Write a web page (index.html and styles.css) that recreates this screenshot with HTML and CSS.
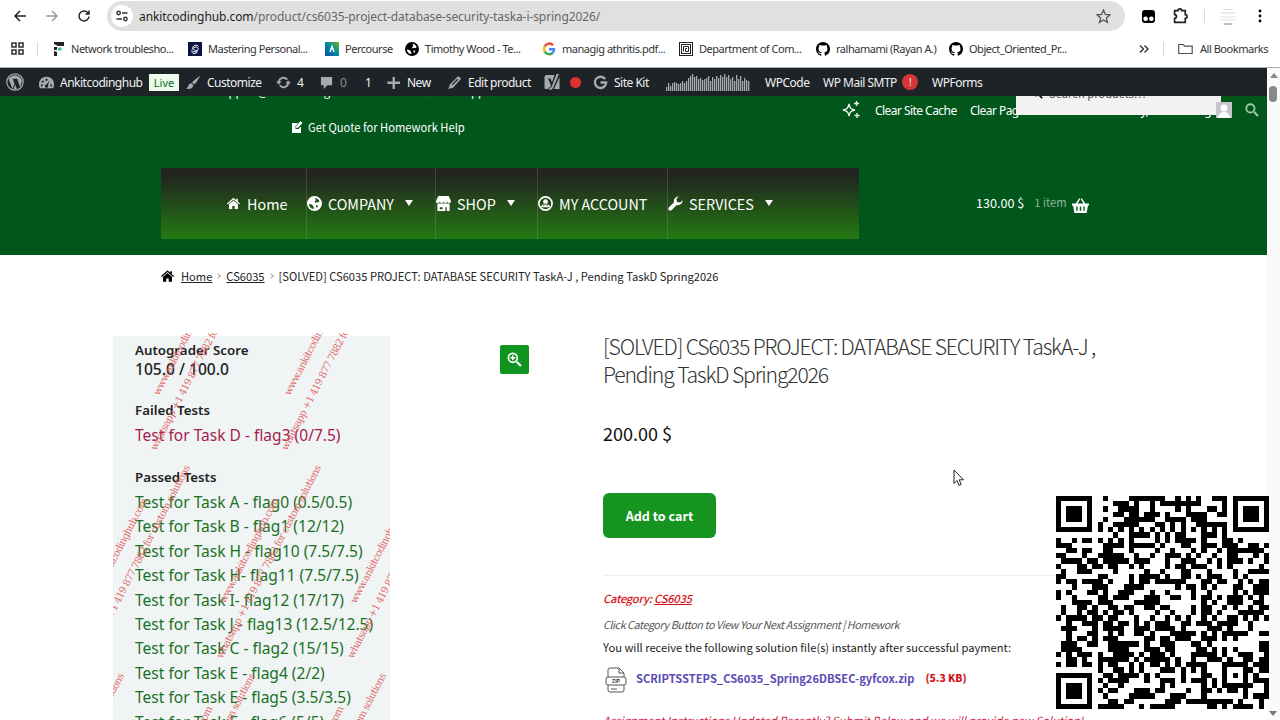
FILE: index.html
```html
<!DOCTYPE html>
<html lang="en">
<head>
  <meta charset="UTF-8" />
  <meta name="viewport" content="width=device-width, initial-scale=1.0"/>
  <title>[SOLVED] CS6035 PROJECT: DATABASE SECURITY - Ankitcodinghub</title>
  <link rel="stylesheet" href="styles.css">
</head>
<body>

  <svg class="defs">
    <symbol id="github" viewBox="0 0 16 16"><path d="M8 0C3.58 0 0 3.58 0 8c0 3.54 2.29 6.53 5.47 7.59.4.07.55-.17.55-.38 0-.19-.01-.82-.01-1.49-2.01.37-2.53-.49-2.69-.94-.09-.23-.48-.94-.82-1.13-.28-.15-.68-.52-.01-.53.63-.01 1.08.58 1.23.82.72 1.21 1.87.87 2.33.66.07-.52.28-.87.51-1.07-1.78-.2-3.64-.89-3.64-3.95 0-.87.31-1.59.82-2.15-.08-.2-.36-1.02.08-2.12 0 0 .67-.21 2.2.82a7.6 7.6 0 0 1 4 0c1.53-1.04 2.2-.82 2.2-.82.44 1.1.16 1.92.08 2.12.51.56.82 1.27.82 2.15 0 3.07-1.87 3.75-3.65 3.95.29.25.54.73.54 1.48 0 1.07-.01 1.93-.01 2.2 0 .21.15.46.55.38A8 8 0 0 0 16 8c0-4.42-3.58-8-8-8z"/></symbol>
    <symbol id="home" viewBox="0 0 16 14"><path d="M8 0 0 7l1 1.2L8 2.1l7 6.1L16 7l-2.600-2.300V1h-2v2zM8 3.300 2.500 8v6h4v-4h3v4h4V8z"/></symbol>
    <symbol id="globe" viewBox="0 0 16 16"><path fill-rule="evenodd" d="M8 0a8 8 0 1 0 0 16A8 8 0 0 0 8 0zM8.500 2c2 0 4 1.500 4.800 3.500L12 7l-1.500-.500L9 7.500 8 6l1.500-1.500zM2 8.500 5 9l1.500 1.500 1 3.300C4.500 13.800 2.300 11.500 2 8.500zM10 9.500l2 .5-1.500 2.500-1-1z"/></symbol>
    <symbol id="lens" viewBox="0 0 16 16"><circle cx="6.200" cy="6.200" r="4.700" fill="none" stroke="currentColor" stroke-width="2.200"/><path d="m9.500 11.200 1.700-1.700 4.500 4.500-1.700 1.700z"/></symbol>
  </svg>

  <!-- browser toolbar -->
  <div class="toolbar">
    <svg class="tb-icon back" viewBox="0 0 14 14"><path d="M13 7H2M7 2 2 7l5 5"/></svg>
    <svg class="tb-icon forward" viewBox="0 0 14 14"><path d="M1 7h11M7 2l5 5-5 5"/></svg>
    <svg class="tb-icon reload" viewBox="0 0 14 14"><path d="M12 7.500A5 5 0 1 1 10.800 3.700L12 5M12 1.500V5H8.500"/></svg>
    <div class="address">
      <span class="site-info"><svg viewBox="0 0 12 12"><circle cx="2.600" cy="3" r="1.700"/><path d="M6 3h5.500M.500 9H6"/><circle cx="9.400" cy="9" r="1.700"/></svg></span>
      <span class="url"><b>ankitcodinghub.com</b>/product/cs6035-project-database-security-taska-i-spring2026/</span>
      <svg class="star" viewBox="0 0 14 14"><path d="m7 1 1.700 4 4.300.400-3.300 2.900 1 4.200L7 10.300l-3.700 2.200 1-4.200L1 5.400 5.300 5z"/></svg>
    </div>
    <svg class="ext" viewBox="0 0 13 13"><rect width="13" height="13" rx="3"/><circle cx="3.600" cy="8.800" r="2.300" fill="#fff"/><circle cx="9.400" cy="8.800" r="2.300" fill="#fff"/></svg>
    <svg class="puzzle" viewBox="0 0 15 15"><path d="M1.500 2.500h3.300a1.700 1.700 0 0 1 3.400 0h3.300v3.800a1.700 1.700 0 0 1 0 3.400v3.800h-10v-3.800a1.700 1.700 0 0 0 0-3.400z"/></svg>
    <span class="divider"></span>
    <svg class="profile" viewBox="0 0 18 18"><path d="M4 2.500h10M1.500 6h15M1 10h16M2 13h14" stroke="#d8dde0"/><path d="M5 17h8" stroke="#aaa" stroke-width="1.500"/></svg>
    <svg class="dots" viewBox="0 0 4 14"><circle cx="2" cy="2" r="1.400"/><circle cx="2" cy="7" r="1.400"/><circle cx="2" cy="12" r="1.400"/></svg>
  </div>

  <div class="bookmarks">
    <svg class="apps" viewBox="0 0 13 13"><path d="M1 1h4v4H1zM8 1h4v4H8zM1 8h4v4H1zM8 8h4v4H8z"/></svg>
    <span class="divider"></span>
    <a class="bm"><svg viewBox="0 0 14 14"><path d="M3 0h10v4H7L3 2zM3 5h3v3H3zM3 9l3 1v4H3z" fill="#222"/><path d="M7 5.500h3.500v3H7z" fill="#35c3a4"/></svg>Network troublesho...</a>
    <a class="bm"><svg viewBox="0 0 14 14"><rect width="14" height="14" fill="#0b1344"/><path d="M10.500 4.500C9 2 4 3.500 5 6.500s5 1 4 3.500-5 1.500-5.500-.500M4 7.500C6 4 11 4.500 10 7.500s-5 3-6 1" fill="none" stroke="#fff"/></svg>Mastering Personal...</a>
    <a class="bm bm-short"><svg viewBox="0 0 14 14"><defs><linearGradient id="pg" x1="0" y1="1" x2="1" y2="0"><stop stop-color="#064ea5"/><stop offset=".5" stop-color="#0089a5"/><stop offset="1" stop-color="#66bb18"/></linearGradient></defs><rect width="14" height="14" fill="url(#pg)"/><path d="m5 10 2-5.500L9 10" fill="none" stroke="#fff" stroke-width="1.500"/></svg>Percourse</a>
    <a class="bm"><svg viewBox="0 0 16 16"><use href="#globe"/></svg>Timothy Wood - Te...</a>
    <a class="bm"><svg viewBox="0 0 14 14" fill="none" stroke-width="2.400"><path d="M11 3.200A5 5 0 0 0 2.700 4.500" stroke="#ea4335"/><path d="M2.700 4.500a5.200 5.200 0 0 0 0 5" stroke="#fbbc04"/><path d="M2.700 9.500A5 5 0 0 0 10.500 11" stroke="#34a853"/><path d="M10.500 11A5 5 0 0 0 12 7.200H7" stroke="#4285f4"/></svg>managig athritis.pdf...</a>
    <a class="bm"><svg viewBox="0 0 14 14" fill="none" stroke="#222"><rect x=".5" y=".5" width="13" height="13"/><rect x="2.500" y="2.500" width="9" height="9"/><path d="M4.500 9.500v-5h5v5h-3v-3h1.500"/></svg>Department of Com...</a>
    <a class="bm bm-git"><svg><use href="#github"/></svg>ralhamami (Rayan A.)</a>
    <a class="bm bm-last"><svg><use href="#github"/></svg>Object_Oriented_Pr...</a>
    <svg class="more" viewBox="0 0 10 10"><path d="m1 1.500 3.500 3.500L1 8.500M5.500 1.500 9 5 5.500 8.500"/></svg>
    <span class="divider"></span>
    <a class="bm-all"><svg viewBox="0 0 15 12"><path d="M.7 10.500v-9h4.500l1.500 1.700h7.500v7.300z"/></svg>All Bookmarks</a>
  </div>

  <div class="viewport">
    <!-- wordpress admin bar -->
    <div class="adminbar">
      <svg class="ab-wp" viewBox="0 0 18 18"><circle cx="9" cy="9" r="8.200" fill="none" stroke="#a7aaad" stroke-width="1.200"/><path d="M2.400 5.800 6.600 16l1.900-5.200L6.700 5.800h4.500l3 8.800 1.600-5.500c.4-2-.6-3-1.300-4.200A7 7 0 0 0 3.300 5zM9.300 11.500l-1.700 4.700h3.300z"/></svg>
      <a class="ab-item" style="width:103px"><svg viewBox="0 0 16 16"><path fill-rule="evenodd" d="M8 2a8 8 0 0 0-7 12h14A8 8 0 0 0 8 2zM7 4h2v2H7zM3 6h2v2H3zM11.500 5.500 9.500 11a1.700 1.700 0 1 1-1.500-.800zM2 10h2v2H2zM12 10h2v2h-2z"/></svg>Ankitcodinghub</a>
      <span class="live">Live</span>
      <a class="ab-item" style="width:90px"><svg viewBox="0 0 16 16"><path d="M15.500.500 8 6 6.500 8l2 2L10.500 8.500zM5.700 8.700C2 9 3.500 12.500 0 14.500c3 1 7.500 0 7.800-3.700z"/></svg>Customize</a>
      <a class="ab-item" style="width:43px"><svg viewBox="0 0 16 16"><path d="M3 7.500A5 5 0 0 1 12 5M13 8.500A5 5 0 0 1 4 11" fill="none" stroke="#a7aaad" stroke-width="2"/><path d="M0 7h6L3 10.500zM10 9h6l-3-3.500z"/></svg>4</a>
      <a class="ab-item" style="width:44px"><svg viewBox="0 0 16 16"><path d="M2 2h12v9H9l-4 4v-4H2z"/></svg><i>0</i></a>
      <a class="ab-text" style="width:23px">1</a>
      <a class="ab-item" style="width:61px"><svg viewBox="0 0 16 16"><path d="M7 2h2.500v5H15v2.500H9.500V15H7V9.500H1.500V7H7z"/></svg>New</a>
      <a class="ab-item" style="width:95px"><svg viewBox="0 0 16 16"><path fill-rule="evenodd" d="m12 1 3 3-8.500 9.500L1.500 15 3 10zM11 4 5 10l1 1 6-6z"/></svg>Edit product</a>
      <svg class="ab-yoast" viewBox="0 0 16 16"><path fill-rule="evenodd" d="M2 1h8.500L8 8.500 6.500 4.500H4l3 7c-.5 1.500-1 2-2.500 2V15H2a1.500 1.500 0 0 1-1.500-1.500v-11zM12.500 0H15L9.500 13c-.8 2-2 3-4 3v-2c1.500 0 2-.8 2.500-2zM15.500 3v12H10z"/></svg>
      <span class="ab-dot"></span>
      <a class="ab-item" style="width:71px"><svg viewBox="0 0 16 16"><path d="M13 4.500A6 6 0 1 0 14 8H8" fill="none" stroke="#a7aaad" stroke-width="2.500"/></svg>Site Kit</a>
      <svg class="ab-bars" id="stats" viewBox="0 0 85 18"></svg>
      <a class="ab-text" style="width:58px">WPCode</a>
      <a class="ab-text" style="width:79px">WP Mail SMTP</a>
      <span class="ab-alert">!</span>
      <a class="ab-text">WPForms</a>
    </div>

    <header class="site-header">
      <!-- admin bar items that wrap on to a second row -->
      <div class="adminbar-wrap">
        <svg class="sparkle" viewBox="0 0 20 20"><path d="M8 4c.8 4 2 5.200 6 6-4 .8-5.200 2-6 6-.8-4-2-5.200-6-6 4-.8 5.200-2 6-6zM15.500 1v5M13 3.500h5M16 13v5M13.500 15.500h5"/></svg>
        <a class="wrap-cache">Clear Site Cache</a>
        <a class="wrap-page">Clear Page Cache</a>
        <a class="wrap-howdy">Howdy, ankitcodinghub</a>
        <svg class="avatar" viewBox="0 0 16 16"><path d="M0 0h16v16H0z" fill="#c5c5cb"/><circle cx="8" cy="6" r="3.500" fill="#fff"/><path d="M2 16c0-8 12-8 12 0z" fill="#fff"/></svg>
        <svg class="wrap-lens"><use href="#lens"/></svg>
      </div>
      <div class="product-search"><svg><use href="#lens"/></svg>Search products…</div>

      <div class="contact">
        <span class="mail">✉ support@ankitcodinghub.com</span><span class="phone">✆ whatsapp +1 419 877 7882</span>
      </div>
      <a class="quote"><svg viewBox="0 0 12 12"><path d="M1 2h6L4.500 5v3h3L10 5.500V12H1zM9.500 0l2 2-4.500 4.800-2 .2.200-2z"/></svg>Get Quote for Homework Help</a>

      <div class="nav-row">
        <nav class="menu">
          <a class="m-home"><svg viewBox="0 0 16 14"><use href="#home"/></svg>Home</a>
          <a class="m-company"><svg><use href="#globe"/></svg>COMPANY<b></b></a>
          <a class="m-shop"><svg viewBox="0 0 16 16"><path d="M2.500 0h11L16 5.500c0 2-2.500 3-4 1-1.200 1.500-2.800 1.500-4 0-1.200 1.500-2.800 1.500-4 0-1.500 2-4 1-4-1zM1.500 8h13v8h-3v-4h-1.500v4H1.500zM4 12h3v2H4z" fill-rule="evenodd"/></svg>SHOP<b></b></a>
          <a class="m-account"><svg viewBox="0 0 16 16"><circle cx="8" cy="8" r="7" fill="none" stroke="#fff" stroke-width="1.800"/><circle cx="8" cy="6" r="2.600"/><path d="M3 12c1-4.500 9-4.500 10 0z"/><path d="M5.500 10.500 8 8.500l2.500 2" stroke="#245a17" fill="none"/></svg>MY ACCOUNT</a>
          <a class="m-services"><svg viewBox="0 0 16 16"><path d="M15.500 4.500A4.800 4.800 0 0 1 9.300 9.500L4 15a2 2 0 0 1-3-3l5.500-5.300A4.800 4.800 0 0 1 11.500.5L9 3l.5 3.500L13 7z"/></svg>SERVICES<b></b></a>
        </nav>
        <a class="cart"><span class="amount">130.00 $</span><span class="count">1 item</span><svg viewBox="0 0 16 14"><path fill-rule="evenodd" d="M3.500 5 6.800.200l1 .7L5.200 5h5.600L8.200.9l1-.7L12.500 5H16v2h-1l-1.200 7H2.200L1 7H0V5zM4 8v4h1.300V8zm3.300 0v4h1.400V8zm3.400 0v4H12V8z"/></svg></a>
      </div>
    </header>

    <div class="breadcrumb"><svg><use href="#home"/></svg><a>Home</a><i></i><a>CS6035</a><i></i><span>[SOLVED] CS6035 PROJECT: DATABASE SECURITY TaskA-J , Pending TaskD Spring2026</span></div>

    <main class="product">
      <div class="gallery">
        <h4>Autograder Score</h4>
        <p class="score">105.0 / 100.0</p>
        <h4 class="failed-head">Failed Tests</h4>
        <p class="failed">Test for Task D - flag3 (0/7.5)</p>
        <h4 class="passed-head">Passed Tests</h4>
        <ul class="passed">
          <li>Test for Task A - flag0 (0.5/0.5)</li>
          <li>Test for Task B - flag1 (12/12)</li>
          <li>Test for Task H - flag10 (7.5/7.5)</li>
          <li>Test for Task H- flag11 (7.5/7.5)</li>
          <li>Test for Task I- flag12 (17/17)</li>
          <li>Test for Task J - flag13 (12.5/12.5)</li>
          <li>Test for Task C - flag2 (15/15)</li>
          <li>Test for Task E - flag4 (2/2)</li>
          <li>Test for Task E - flag5 (3.5/3.5)</li>
          <li>Test for Task F - flag6 (5/5)</li>
        </ul>
        <svg class="watermark" id="watermark" viewBox="113 333 277 387"></svg>
      </div>

      <span class="zoom"><svg viewBox="0 0 16 16"><circle cx="6.200" cy="6.200" r="4.800" fill="none" stroke="#fff" stroke-width="1.800"/><path d="M5.400 3.500H7v1.900h1.900V7H7v1.900H5.400V7H3.500V5.400h1.900zM9.500 11.200l1.700-1.700 4.500 4.500-1.700 1.700z"/></svg></span>

      <div class="summary">
        <h1>[SOLVED] CS6035 PROJECT: DATABASE SECURITY TaskA-J ,<br>Pending TaskD Spring2026</h1>
        <p class="price">200.00 $</p>
        <button class="add">Add to cart</button>
        <div class="meta">
          <p class="category">Category: <a>CS6035</a></p>
          <p class="hint">Click Category Button to View Your Next Assignment | Homework</p>
          <p class="receive">You will receive the following solution file(s) instantly after successful payment:</p>
          <p class="file"><svg viewBox="0 0 22 26"><path d="M3 10V3a2 2 0 0 1 2-2h9l5 5v4M14 1v5h5M3 18v5a2 2 0 0 0 2 2h12a2 2 0 0 0 2-2v-5M6 22h6"/><rect x="1" y="10" width="20" height="8" rx="2"/><text x="11" y="16">ZIP</text></svg><a>SCRIPTSSTEPS_CS6035_Spring26DBSEC-gyfcox.zip</a><b>(5.3 KB)</b></p>
          <p class="update">Assignment Instructions Updated Recently? Submit Below and we will provide new Solution!</p>
        </div>
      </div>
    </main>

    <div class="scrollbar"><i class="up"></i><i class="thumb"></i><i class="down"></i></div>
  </div>

  <svg class="qr" id="qr" viewBox="0 0 41 41"></svg>
  <svg class="pointer" viewBox="0 0 12 18"><path d="M1 1v13.500l3-3 2 5 2.200-1-2-4.700h4.300z"/></svg>

  <script src="script.js"></script>
</body>
</html>
```
FILE: styles.css
```css
* {
  box-sizing: border-box;
}

body {
  margin: 0;
  width: 1280px;
  height: 720px;
  overflow: hidden;
  position: relative;
  background: #fff;
  font-family: "Noto Sans CJK SC", "Noto Sans", sans-serif;
  color: #222;
}

p, h1, h4, ul {
  margin: 0;
  padding: 0;
}

svg {
  flex: none;
  display: block;
}

.defs {
  position: absolute;
  width: 0;
  height: 0;
}

/* browser toolbar */
.toolbar {
  height: 32px;
  display: flex;
  align-items: center;
  font-family: "Noto Sans", sans-serif;
}

.tb-icon {
  width: 14px;
  height: 14px;
  fill: none;
  stroke: #222;
  stroke-width: 1.5;
}

.back {
  margin-left: 13px;
}

.forward {
  margin-left: 18px;
  stroke: #999;
}

.reload {
  margin-left: 18px;
}

.address {
  margin-left: 16px;
  width: 1018px;
  height: 30px;
  border-radius: 15px;
  background: #e0e0e0;
  display: flex;
  align-items: center;
}

.site-info {
  width: 22px;
  height: 22px;
  margin-left: 4px;
  border-radius: 50%;
  background: #fff;
  display: flex;
  align-items: center;
  justify-content: center;
}

.site-info svg {
  width: 12px;
  height: 12px;
  fill: none;
  stroke: #333;
  stroke-width: 1.4;
}

.url {
  margin-left: 6px;
  flex: 1;
  font-size: 12px;
  letter-spacing: -0.08px;
  color: #666;
}

.url b {
  font-weight: 400;
  color: #222;
}

.star {
  width: 15px;
  height: 15px;
  margin-right: 14px;
  fill: none;
  stroke: #555;
  stroke-width: 1.2;
}

.ext {
  width: 13px;
  height: 13px;
  margin-left: 17px;
}

.puzzle {
  width: 16px;
  height: 16px;
  margin-left: 18px;
  fill: none;
  stroke: #222;
  stroke-width: 1.6;
}

.divider {
  width: 1px;
  height: 14px;
  background: #d5d8dc;
}

.toolbar .divider {
  margin-left: 15px;
}

.profile {
  width: 18px;
  height: 18px;
  margin-left: 14px;
}

.dots {
  width: 4px;
  height: 14px;
  margin-left: 21px;
}

/* bookmarks bar */
.bookmarks {
  height: 35px;
  display: flex;
  align-items: center;
  font: 11px "Noto Sans", sans-serif;
  letter-spacing: -0.47px;
  color: #333;
  padding-bottom: 2px;
}

.apps {
  width: 13px;
  height: 13px;
  margin-left: 11px;
  fill: none;
  stroke: #333;
  stroke-width: 1.6;
}

.bookmarks > .apps + .divider {
  margin: 0 13px;
}

.bm {
  width: 137px;
  display: flex;
  align-items: center;
  white-space: nowrap;
}

.bm svg {
  width: 14px;
  height: 14px;
  margin-right: 6px;
}

.bm-short {
  width: 80px;
}

.bm-git {
  width: 133px;
}

.bm-last {
  width: 190px;
}

.more {
  width: 10px;
  height: 10px;
  fill: none;
  stroke: #333;
  stroke-width: 1.4;
}

.more + .divider {
  margin: 0 14px;
}

.bm-all {
  display: flex;
  align-items: center;
  white-space: nowrap;
}

.bm-all svg {
  width: 15px;
  height: 12px;
  margin-right: 7px;
  fill: none;
  stroke: #555;
  stroke-width: 1.2;
}

/* page area */
.viewport {
  height: 653px;
  position: relative;
  padding-right: 13px;
  border-top: 1px solid #a9adb0;
  overflow: hidden;
}

.adminbar {
  height: 28px;
  background: #1d2327;
  color: #f0f0f1;
  display: flex;
  align-items: center;
  font: 12px "Noto Sans", sans-serif;
  letter-spacing: -0.5px;
  white-space: nowrap;
  position: relative;
  z-index: 3;
}

.adminbar svg {
  fill: #a7aaad;
}

.ab-wp {
  width: 18px;
  height: 18px;
  margin: 0 17px 0 6px;
}

.ab-item {
  display: flex;
  align-items: center;
}

.ab-item svg {
  width: 15px;
  height: 15px;
  margin: 0 6px 0 -2px;
}

.ab-item i {
  font-style: normal;
  color: #8c9094;
}

.live {
  width: 30px;
  height: 17px;
  margin: 0 9px 0 5px;
  background: #ecfbec;
  color: #0a6b23;
  font-size: 11px;
  line-height: 17px;
  letter-spacing: 0;
  text-align: center;
}

.ab-yoast {
  width: 16px;
  height: 16px;
}

.ab-dot {
  width: 11px;
  height: 11px;
  margin: 0 14px 0 10px;
  border-radius: 50%;
  background: #dc3232;
}

.ab-bars {
  width: 85px;
  height: 18px;
  margin-right: 14px;
}

.ab-alert {
  width: 16px;
  height: 16px;
  margin-right: 14px;
  border-radius: 50%;
  background: #d63638;
  font-size: 10px;
  line-height: 16px;
  text-align: center;
}

.site-header {
  height: 159px;
  display: flow-root;
  position: relative;
  overflow: hidden;
  background: #00561b;
  color: #fff;
}

/* wrapped admin items lie over the header */
.adminbar-wrap {
  position: absolute;
  top: 3px;
  left: 841px;
  right: 0;
  height: 22px;
  display: flex;
  align-items: center;
  font: 12px "Noto Sans", sans-serif;
  letter-spacing: -0.55px;
  white-space: nowrap;
}

.sparkle {
  width: 20px;
  height: 20px;
  margin-right: 14px;
  fill: none;
  stroke: #eef5ef;
  stroke-width: 1.3;
}

.wrap-cache {
  width: 95px;
}

.wrap-page {
  width: 140px;
}

.wrap-howdy {
  width: 106px;
}

.avatar {
  width: 16px;
  height: 16px;
  position: relative;
  z-index: 2;
}

.wrap-lens {
  width: 14px;
  height: 14px;
  margin-left: 13px;
  fill: #9cc5a4;
  color: #9cc5a4;
}

.product-search {
  position: absolute;
  z-index: 1;
  top: -22px;
  left: 1016px;
  width: 205px;
  height: 41px;
  padding: 0 16px 2px;
  background: #f2f2f3;
  color: #555;
  font-size: 11.2px;
  line-height: 39px;
  display: flex;
  align-items: center;
}

.product-search svg {
  width: 11px;
  height: 11px;
  margin-right: 6px;
  color: #111;
}

.contact {
  padding-left: 205px;
  margin-top: -14px;
  height: 18px;
  font-size: 11.2px;
  line-height: 18px;
}

.phone {
  margin-left: 46px;
}

.quote {
  height: 18px;
  margin: 17px 0 0 291px;
  padding-top: 1px;
  display: flex;
  align-items: center;
  font-size: 11.2px;
  line-height: 18px;
}

.quote svg {
  width: 12px;
  height: 12px;
  margin-right: 5px;
  fill: #fff;
}

.nav-row {
  margin: 33px 0 0 161px;
  display: flex;
  align-items: center;
}

.menu {
  width: 698px;
  height: 71px;
  padding: 0 0 0 66px;
  display: flex;
  background: linear-gradient(#222 0%, #222c1f 18%, #237a12 100%);
  font-size: 14.35px;
}

.menu a {
  display: flex;
  align-items: center;
  padding-bottom: 1px;
  border-right: 1px solid rgba(255, 255, 255, 0.13);
}

.menu a:last-child {
  border: none;
}

.menu svg {
  width: 15px;
  height: 15px;
  margin-right: 6px;
  fill: #fff;
}

.menu b {
  margin-left: 11px;
  border: 4px solid transparent;
  border-top: 6px solid #fff;
  border-bottom: 0;
}

.menu .m-home {
  width: 80px;
}

.menu .m-home svg {
  width: 13px;
  height: 13px;
  margin-right: 7px;
}

.menu .m-company {
  width: 129px;
}

.menu .m-shop {
  width: 102px;
}

.menu .m-account {
  width: 130px;
}

.cart {
  margin-left: 117px;
  padding-bottom: 3px;
  display: flex;
  align-items: center;
  font-size: 12.6px;
}

.count {
  margin: 0 5px 0 10px;
  font-size: 11.2px;
  color: #8db698;
}

.cart svg {
  width: 17px;
  height: 15px;
  margin-top: 6px;
  fill: #fff;
}

/* breadcrumb */
.breadcrumb {
  height: 44px;
  padding: 0 0 3px 161px;
  display: flex;
  align-items: center;
  font-size: 11.15px;
  white-space: nowrap;
}

.breadcrumb svg {
  width: 13px;
  height: 12px;
  margin-right: 7px;
}

.breadcrumb a {
  text-decoration: underline;
}

.breadcrumb i {
  width: 4px;
  height: 4px;
  margin: 0 6px 0 4px;
  border: solid #aaa;
  border-width: 1px 1px 0 0;
  transform: rotate(45deg);
}

/* product */
.product {
  display: flex;
  align-items: flex-start;
  padding: 33px 0 0 113px;
}

.gallery {
  position: relative;
  width: 277px;
  height: 400px;
  margin-top: 4px;
  padding: 5px 0 0 22px;
  background: #f1f4f5;
  font-family: "Noto Sans", sans-serif;
  white-space: nowrap;
}

.gallery h4 {
  font-size: 13.3px;
  line-height: 18px;
  font-weight: 600;
}

.score {
  font-size: 15.6px;
  line-height: 20px;
  font-weight: 500;
}

.gallery .failed-head {
  margin-top: 22px;
}

.failed {
  margin-top: 4px;
  font-size: 15.55px;
  line-height: 24px;
  color: #a51c4d;
}

.gallery .passed-head {
  margin-top: 21px;
}

.passed {
  margin-top: 4px;
  list-style: none;
  font-size: 15.55px;
  line-height: 24.4px;
  color: #19711f;
}

.watermark {
  position: absolute;
  left: 0;
  top: -3px;
  width: 277px;
  height: 387px;
  overflow: hidden;
  fill: #e0605c;
  fill-opacity: 0.95;
  font: 10px "DejaVu Serif", serif;
}

.zoom {
  width: 29px;
  height: 29px;
  margin: 13px 74px 0 110px;
  border-radius: 2px;
  background: #0f9420;
  display: flex;
  align-items: center;
  justify-content: center;
}

.zoom svg {
  width: 15px;
  height: 15px;
  fill: #fff;
}

.summary {
  width: 530px;
  white-space: nowrap;
}

.summary h1 {
  font-size: 21.2px;
  line-height: 28px;
  font-weight: 200;
  letter-spacing: -1.15px;
  color: #333;
}

.price {
  margin-top: 31px;
  font-size: 18px;
  line-height: 28px;
  color: #111;
}

.add {
  display: block;
  width: 113px;
  height: 45px;
  margin-top: 46px;
  border: none;
  border-radius: 6px;
  background: #159520;
  color: #fff;
  font: bold 12.6px "Noto Sans CJK SC", sans-serif;
}

.meta {
  margin-top: 37px;
  border-top: 1px solid #eee;
  padding-top: 12px;
  font-size: 11.15px;
  line-height: 20px;
}

.category {
  color: #d5121a;
  font-style: italic;
  font-weight: 500;
  letter-spacing: -0.25px;
}

.category a {
  text-decoration: underline;
}

.hint {
  margin-top: 6px;
  font-size: 10.8px;
  font-style: italic;
  letter-spacing: -0.45px;
  color: #555;
}

.receive {
  margin-top: 3px;
}

.file {
  margin-top: 6px;
  display: flex;
  align-items: center;
  font-weight: 700;
}

.file svg {
  width: 22px;
  height: 26px;
  margin: 4px 9px 0 2px;
  fill: none;
  stroke: #555;
}

.file text {
  font: bold 5px "Liberation Sans", sans-serif;
  text-anchor: middle;
  fill: #333;
  stroke: none;
}

.file a {
  color: #5b4bb5;
}

.file b {
  margin-left: 11px;
  font-size: 10.3px;
  color: #d5121a;
}

.update {
  margin-top: 17px;
  font-style: italic;
  letter-spacing: 0.02px;
  color: #d51c48;
}

.scrollbar {
  position: absolute;
  top: 0;
  right: 0;
  width: 13px;
  height: 652px;
  background: #fafafa;
}

.scrollbar i {
  position: absolute;
  left: 3px;
  border: 4px solid transparent;
}

.scrollbar .up {
  top: 5px;
  border-top: 0;
  border-bottom: 5px solid #888;
}

.scrollbar .thumb {
  top: 18px;
  left: 2px;
  width: 8px;
  height: 16px;
  border: none;
  border-radius: 4px;
  background: #888;
}

.scrollbar .down {
  bottom: 4px;
  left: 2px;
  border-bottom: 0;
  border-top: 5px solid #777;
}

/* floats over the page */
.qr {
  position: absolute;
  left: 1056px;
  top: 496px;
  width: 213px;
  height: 213px;
  background: #fff;
}

.pointer {
  position: absolute;
  left: 953px;
  top: 469px;
  width: 12px;
  height: 18px;
  fill: #fff;
  stroke: #222;
}
```
FILE: script.js
```javascript
const SVG_NS = 'http://www.w3.org/2000/svg';

// admin bar stats
const bars = [4, 8, 5, 8, 9, 8, 7, 8, 10, 8, 10, 13, 15, 17, 14, 15, 12, 13, 11, 12, 13, 15, 10, 14, 12, 15, 13, 16, 14, 17, 14, 16, 12, 14, 10, 16, 12, 15, 10, 13, 11, 10];
document.getElementById('stats').innerHTML = bars
  .map((h, i) => `<rect x="${i * 2}" y="${18 - h}" width="1.3" height="${h}"/>`)
  .join('');

// watermark
const marks = [[24, 396], [155, 396], [286, 396], [90, 604], [221, 604], [352, 604], [24, 812], [155, 812], [286, 812]];
const watermark = document.getElementById('watermark');
function addMark(text, x, y, length) {
  const el = document.createElementNS(SVG_NS, 'text');
  el.setAttribute('transform', `translate(${x + 4} ${y}) rotate(-62.6)`);
  el.setAttribute('textLength', length);
  el.textContent = text;
  watermark.appendChild(el);
}
marks.forEach(([x, y]) => {
  addMark('www.ankitcodinghub.com', x, y, 117);
  addMark('whatsapp +1 419 877 7882 for custom solutions', x - 3, y + 55, 216);
});

// QR code: version 6, level M, mask 7
function drawQr(svg, text) {
  const size = 41;
  const exp = [], log = [];
  for (let i = 0, v = 1; i < 255; i++) {
    exp[i] = v;
    log[v] = i;
    v <<= 1;
    if (v > 255) v ^= 0x11d;
  }
  const mul = (a, b) => (a && b ? exp[(log[a] + log[b]) % 255] : 0);

  let bits = '0100' + text.length.toString(2).padStart(8, '0');
  for (const c of text) bits += c.charCodeAt(0).toString(2).padStart(8, '0');
  bits += '0000';
  const data = bits.match(/.{8}/g).map(b => parseInt(b, 2));
  for (let pad = 0xec; data.length < 108; pad ^= 0xec ^ 0x11) data.push(pad);

  let gen = [1];
  for (let i = 0; i < 16; i++) {
    const next = [...gen, 0];
    gen.forEach((g, j) => { next[j + 1] ^= mul(g, exp[i]); });
    gen = next;
  }
  const blocks = [0, 1, 2, 3].map(i => data.slice(i * 27, i * 27 + 27));
  const checks = blocks.map(block => {
    const rem = [...block, ...Array(16).fill(0)];
    for (let i = 0; i < 27; i++) {
      const f = rem[i];
      gen.forEach((g, j) => { rem[i + j] ^= mul(g, f); });
    }
    return rem.slice(27);
  });
  const words = [];
  for (let i = 0; i < 27; i++) blocks.forEach(b => words.push(b[i]));
  for (let i = 0; i < 16; i++) checks.forEach(b => words.push(b[i]));

  const grid = Array.from({ length: size }, () => Array(size).fill(null));
  const set = (x, y, v) => {
    if (x >= 0 && y >= 0 && x < size && y < size) grid[y][x] = v ? 1 : 0;
  };
  for (let i = 0; i < size; i++) {
    set(6, i, i % 2 === 0);
    set(i, 6, i % 2 === 0);
  }
  [[3, 3], [size - 4, 3], [3, size - 4]].forEach(([cx, cy]) => {
    for (let dy = -4; dy <= 4; dy++)
      for (let dx = -4; dx <= 4; dx++) {
        const d = Math.max(Math.abs(dx), Math.abs(dy));
        set(cx + dx, cy + dy, d !== 2 && d !== 4);
      }
  });
  for (let dy = -2; dy <= 2; dy++)
    for (let dx = -2; dx <= 2; dx++)
      set(34 + dx, 34 + dy, Math.max(Math.abs(dx), Math.abs(dy)) !== 1);

  const format = 0b100101010100000;
  const bit = i => (format >> i) & 1;
  for (let i = 0; i < 6; i++) set(8, i, bit(i));
  set(8, 7, bit(6));
  set(8, 8, bit(7));
  set(7, 8, bit(8));
  for (let i = 9; i < 15; i++) set(14 - i, 8, bit(i));
  for (let i = 0; i < 8; i++) set(size - 1 - i, 8, bit(i));
  for (let i = 8; i < 15; i++) set(8, size - 15 + i, bit(i));
  set(8, size - 8, 1);

  let n = 0;
  for (let right = size - 1; right >= 1; right -= 2) {
    if (right === 6) right = 5;
    for (let v = 0; v < size; v++)
      for (let j = 0; j < 2; j++) {
        const x = right - j;
        const y = ((right + 1) & 2) === 0 ? size - 1 - v : v;
        if (grid[y][x] !== null) continue;
        const raw = n < words.length * 8 ? (words[n >> 3] >> (7 - (n & 7))) & 1 : 0;
        n++;
        const mask = ((x + y) % 2 + (x * y) % 3) % 2 === 0 ? 1 : 0;
        grid[y][x] = raw ^ mask;
      }
  }

  let d = '';
  grid.forEach((row, y) => row.forEach((v, x) => { if (v) d += `M${x} ${y}h1v1h-1z`; }));
  svg.innerHTML = `<path shape-rendering="crispEdges" d="${d}"/>`;
}
drawQr(document.getElementById('qr'), 'https://www.ankitcodinghub.com/product/cs6035-project-database-security-taska-i-spring2026/');
```
